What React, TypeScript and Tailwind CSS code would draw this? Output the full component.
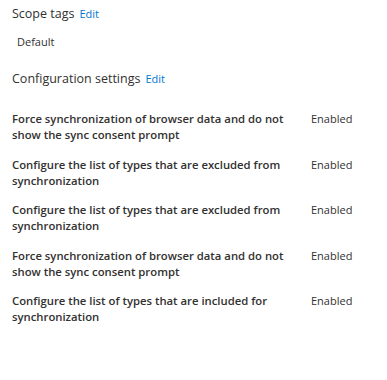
export default function App() {
  const settings = [
    { name: 'Force synchronization of browser data and do not show the sync consent prompt', value: 'Enabled' },
    { name: 'Configure the list of types that are excluded from synchronization', value: 'Enabled' },
    { name: 'Configure the list of types that are excluded from synchronization', value: 'Enabled' },
    { name: 'Force synchronization of browser data and do not show the sync consent prompt', value: 'Enabled' },
    { name: 'Configure the list of types that are included for synchronization', value: 'Enabled' },
  ];

  return (
    <div className="w-[387px] h-[380px] bg-white text-[#323130] font-['Open_Sans',sans-serif] px-3 pt-[4px]">
      <div className="flex items-baseline gap-[5px] leading-[20px]">
        <span className="text-[12.5px]">Scope tags</span>
        <a className="text-[11px] text-[#0078d4]">Edit</a>
      </div>
      <div className="pl-[5px] mt-[10px] text-[11px] leading-[16px]">Default</div>

      <div className="flex items-baseline gap-[5px] mt-[19px] leading-[20px]">
        <span className="text-[12.5px]">Configuration settings</span>
        <a className="text-[11px] text-[#0078d4]">Edit</a>
      </div>

      <div className="mt-[22px] flex flex-col gap-[13.5px]">
        {settings.map((s, i) => (
          <div key={i} className="flex items-start leading-[16px]">
            <div className="w-[299px] pr-3 text-[11.3px] font-semibold">{s.name}</div>
            <div className="text-[11px]">{s.value}</div>
          </div>
        ))}
      </div>
    </div>
  );
}
